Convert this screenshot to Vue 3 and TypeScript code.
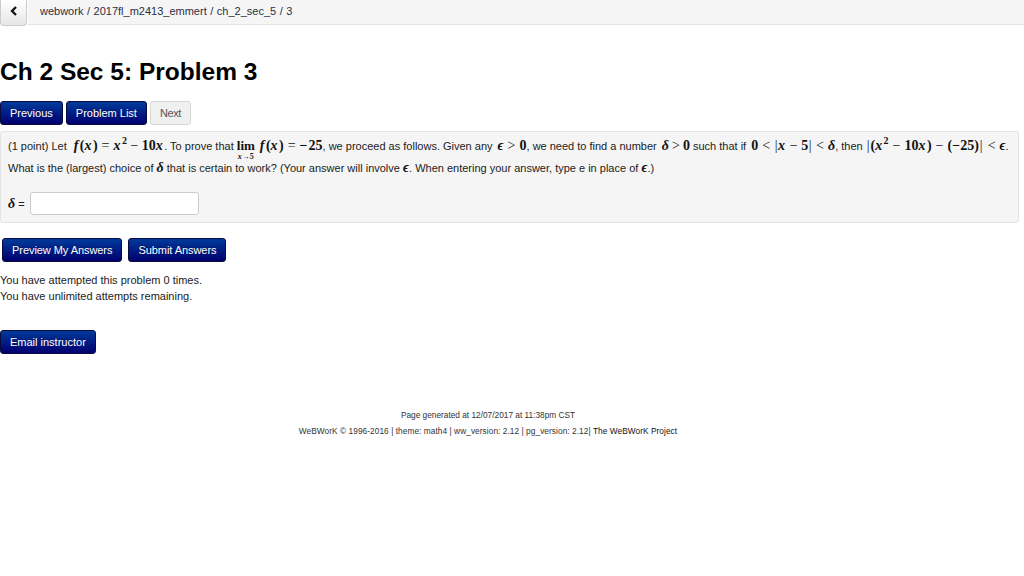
<script setup lang="ts">
const footerLine = 'WeBWorK © 1996-2016 | theme: math4 | ww_version: 2.12 | pg_version: 2.12| '
</script>

<template>
  <div class="page">
    <nav class="top">
      <button class="back" aria-label="Back">
        <svg width="8" height="10" viewBox="0 0 8 10"><path d="M6 1 2 5l4 4" fill="none" stroke="#111" stroke-width="2.3" /></svg>
      </button>
      <div class="crumbs">webwork / 2017fl_m2413_emmert / ch_2_sec_5 / 3</div>
    </nav>

    <h1>Ch 2 Sec 5: Problem 3</h1>

    <div class="nav-buttons">
      <a class="btn">Previous</a>
      <a class="btn">Problem List</a>
      <a class="btn off">Next</a>
    </div>

    <section class="panel">
      <div class="line one">
        (1 point) Let <span class="m first"><i>f</i>(<i>x</i>)<span class="rel">=</span><i>x</i><sup>2</sup><span class="bin">−</span>10<i>x</i></span>. To prove that
        <span class="lim"><span class="m lim-word">lim</span><span class="under"><i>x</i>→5</span></span>
        <span class="m"><i>f</i>(<i>x</i>)<span class="rel">=</span><span class="neg">−</span>25</span>, we proceed as follows. Given any
        <span class="m after"><i class="g">ϵ</i><span class="rel">&gt;</span>0</span>, we need to find a number <span class="m after tight"><i class="g">δ</i><span class="rel">&gt;</span>0</span> such that if
        <span class="m after">0<span class="rel">&lt;</span><span class="bar">|</span><i>x</i><span class="bin">−</span>5<span class="bar">|</span><span class="rel">&lt;</span><i class="g">δ</i></span>, then
        <span class="m wide"><span class="bar">|</span>(<i>x</i><sup>2</sup><span class="bin">−</span>10<i>x</i>)<span class="bin">−</span>(−25)<span class="bar">|</span><span class="rel">&lt;</span><i class="g">ϵ</i></span>.
      </div>
      <div class="line two">
        What is the (largest) choice of <span class="m"><i class="g">δ</i></span> that is certain to work? (Your answer will involve
        <span class="m"><i class="g">ϵ</i></span>. When entering your answer, type e in place of <span class="m"><i class="g">ϵ</i></span>.)
      </div>
      <label class="answer">
        <span><span class="m"><i class="g">δ</i></span> =</span>
        <input type="text" />
      </label>
    </section>

    <div class="submit-buttons">
      <a class="btn">Preview My Answers</a>
      <a class="btn">Submit Answers</a>
    </div>

    <p class="attempts">You have attempted this problem 0 times.<br />You have unlimited attempts remaining.</p>

    <a class="btn email">Email instructor</a>

    <footer>
      <div>Page generated at 12/07/2017 at 11:38pm CST</div>
      <div class="f2">{{ footerLine }}<span class="proj">The WeBWorK Project</span></div>
    </footer>
  </div>
</template>

<style scoped>
.page {
  width: 1024px;
  height: 576px;
  overflow: hidden;
  font-family: "Liberation Sans", Arial, sans-serif;
  font-size: 11px;
  line-height: 16px;
  color: #333;
  background: #fff;
}
.top {
  display: flex;
  height: 26px;
  gap: 1px;
}
.back {
  width: 27px;
  height: 26px;
  padding: 0 0 4px;
  display: flex;
  align-items: center;
  justify-content: center;
  background: linear-gradient(#fff, #e6e6e6);
  border: 1px solid #ccc;
  border-top: 0;
  border-radius: 0 0 4px 4px;
}
.crumbs {
  flex: 1;
  height: 25px;
  padding-left: 12px;
  box-sizing: border-box;
  background: #f5f5f5;
  border-bottom: 1px solid #e3e3e3;
  line-height: 22px;
  word-spacing: 0.5px;
  color: #2b2f45;
}
h1 {
  margin: 30px 0 0;
  font-size: 24.5px;
  line-height: 32px;
  font-weight: 700;
  color: #000;
}
.nav-buttons {
  display: flex;
  gap: 3px;
  margin-top: 13px;
}
.btn {
  display: inline-block;
  box-sizing: border-box;
  height: 24px;
  padding: 0 9px;
  line-height: 22px;
  white-space: nowrap;
  color: #fff;
  background: linear-gradient(#003a9a, #00006e);
  border: 1px solid #0a0a3c;
  border-radius: 3px;
  text-shadow: 0 -1px 0 rgba(0, 0, 0, 0.25);
}
.btn.off {
  color: #555;
  background: #f0f0f0;
  border-color: #d8d8d8;
  text-shadow: none;
  letter-spacing: -0.4px;
}
.panel {
  box-sizing: border-box;
  width: 1019px;
  height: 92px;
  margin-top: 6px;
  padding: 0 0 0 7px;
  background: #f5f5f5;
  border: 1px solid #e3e3e3;
  border-radius: 3px;
  color: #222;
}
.line { white-space: nowrap; }
.one { margin-top: 6px; height: 20px; line-height: 16px; }
.two { margin-top: 2px; line-height: 16px; }
.m {
  font-family: "Liberation Serif", "DejaVu Serif", serif;
  font-size: 14px;
  font-weight: 700;
  color: #111;
}
.m i { letter-spacing: 1.4px; }
.m i.g { letter-spacing: 0; }
.first { margin-left: 4px; }
.after { margin-left: 2px; }
.rel { margin: 0 4px; font-weight: 400; }
.bin { margin: 0 3.5px; font-weight: 400; }
.neg { margin-right: 1px; }
.bar { margin: 0 0.5px; font-weight: 400; }
.tight .rel { margin: 0 3px; }
.wide .bin { margin: 0 4px; }
.wide .bar { margin: 0 1px; }
.m sup { font-size: 10px; line-height: 0; font-weight: 700; }
.lim {
  display: inline-flex;
  flex-direction: column;
  align-items: center;
  vertical-align: top;
  margin-right: 5px;
  line-height: 16px;
}
.lim-word { font-size: 13px; }
.under {
  font-family: "Liberation Serif", serif;
  font-size: 8px;
  font-weight: 700;
  line-height: 5px;
  color: #111;
}
.answer {
  display: flex;
  align-items: center;
  gap: 5px;
  margin-top: 16px;
}
.answer input {
  box-sizing: border-box;
  width: 169px;
  height: 23px;
  background: #fff;
  border: 1px solid #ccc;
  border-radius: 3px;
}
.submit-buttons {
  display: flex;
  gap: 6px;
  margin: 15px 0 0 2px;
}
.submit-buttons .btn { letter-spacing: -0.06px; }
.attempts {
  margin: 10px 0 0;
  color: #222;
}
.email {
  display: block;
  width: 96px;
  margin-top: 26px;
}
footer {
  margin-top: 53px;
  text-align: center;
  width: 976px;
  font-size: 8.3px;
  line-height: 16px;
  color: #333;
}
.f2 { letter-spacing: 0.06px; }
.proj { color: #111; }
</style>
